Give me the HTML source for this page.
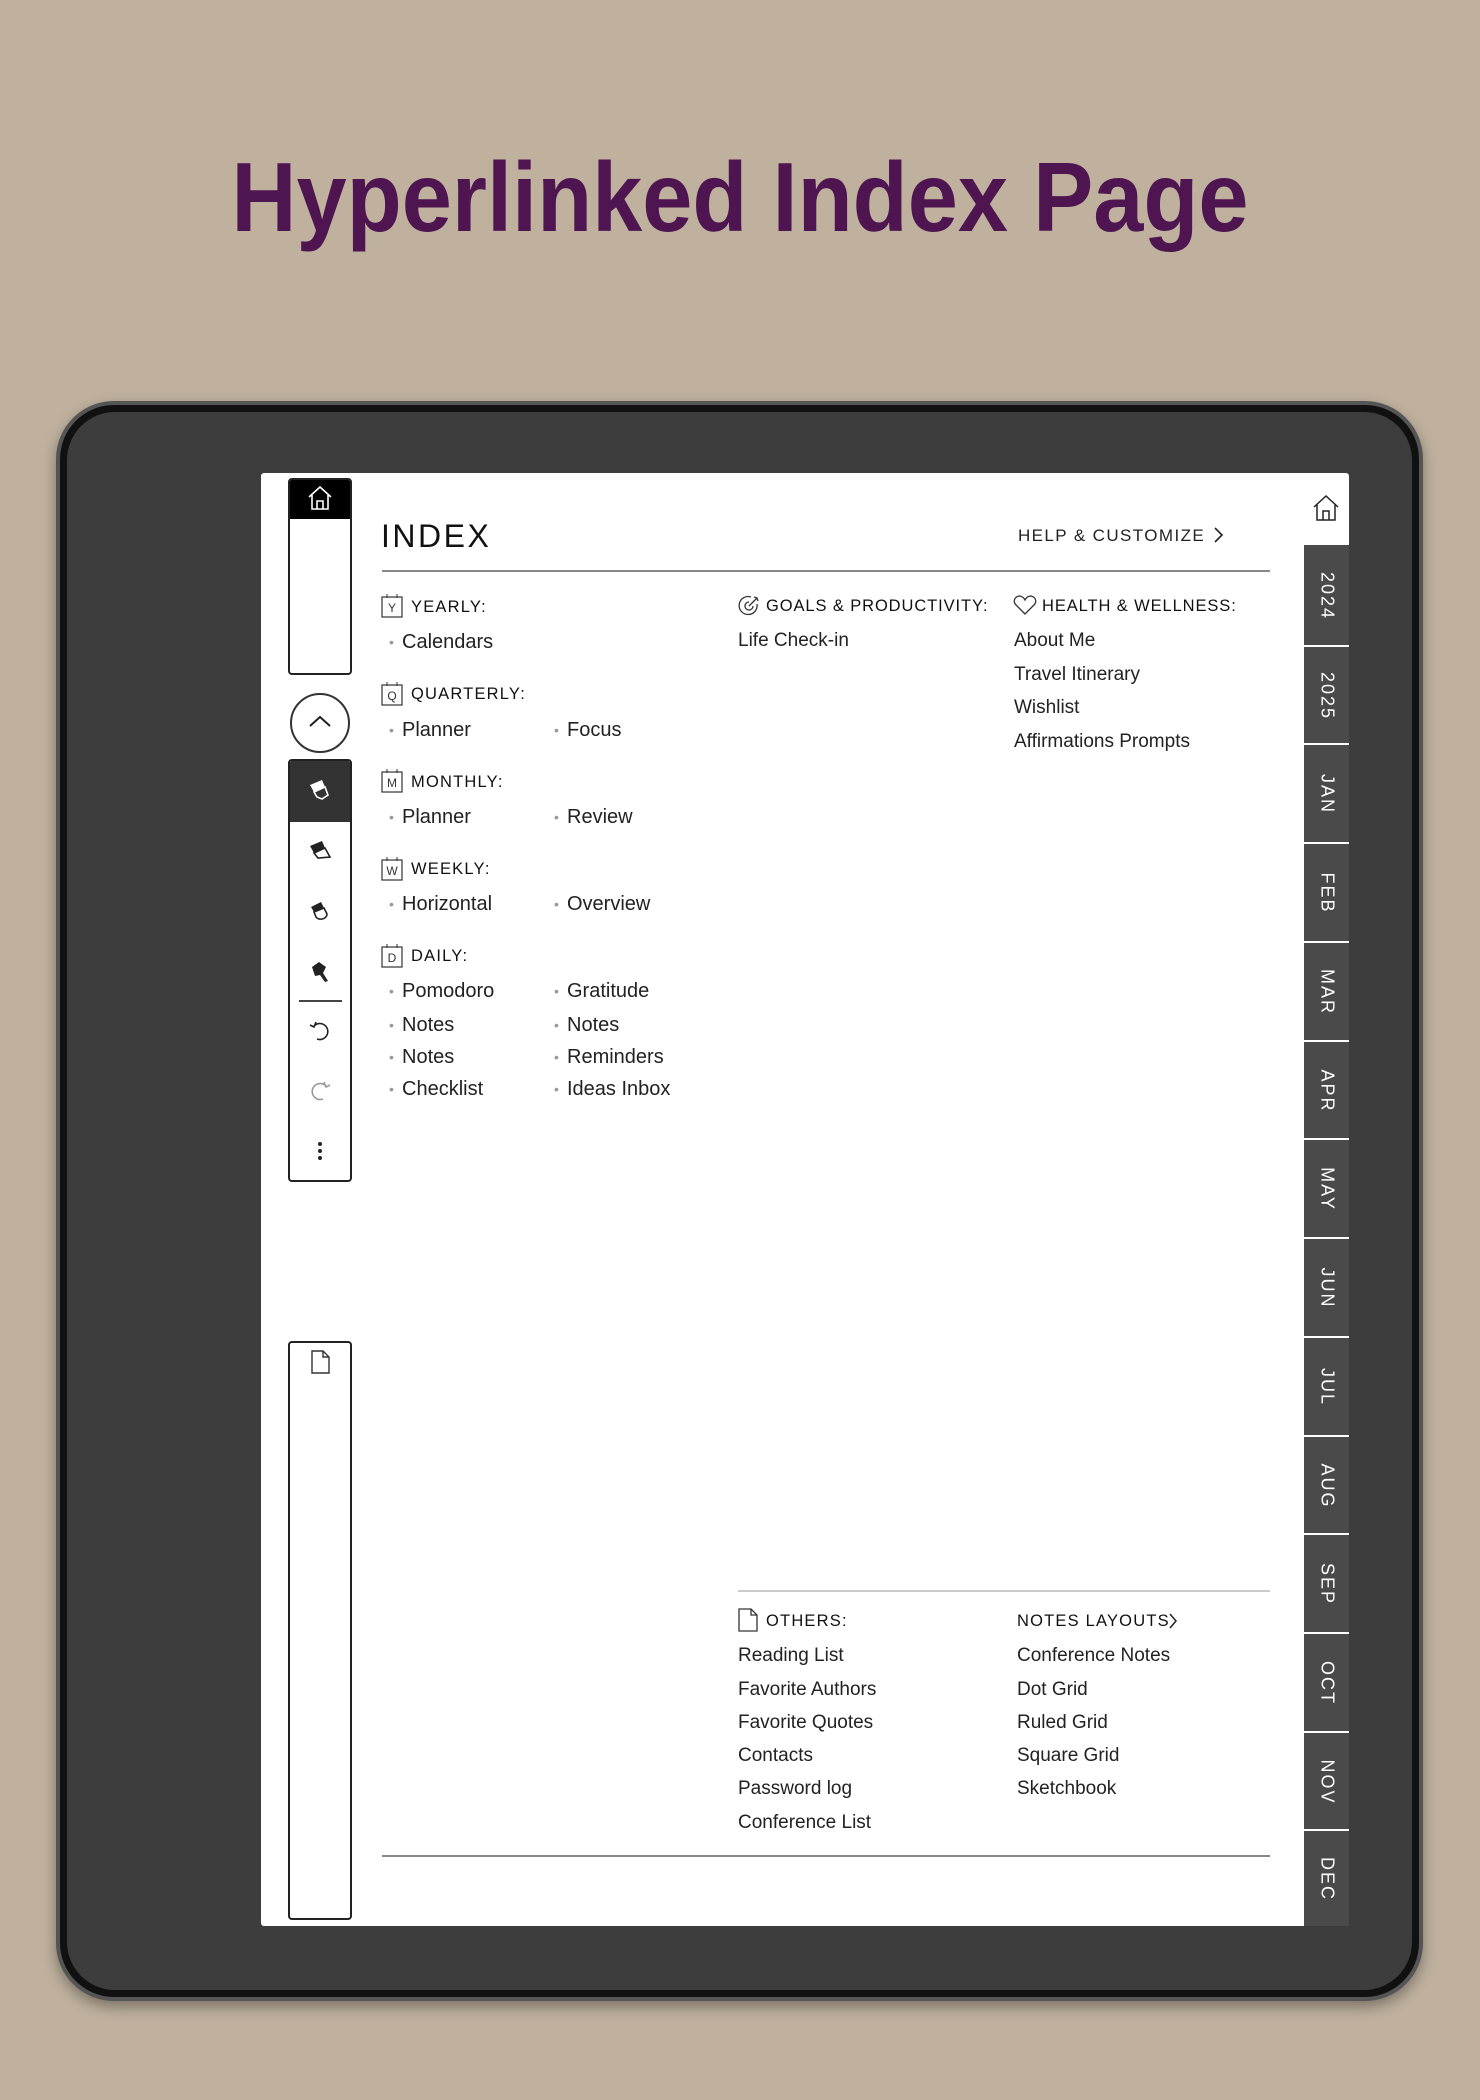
<!DOCTYPE html>
<html><head><meta charset="utf-8"><style>
*{margin:0;padding:0;box-sizing:border-box}
body{width:1480px;height:2100px;background:#bfb19e;position:relative;overflow:hidden;font-family:"Liberation Sans",sans-serif;color:#222}
.t{position:absolute;white-space:nowrap;line-height:1}
.h{font-size:16.5px;letter-spacing:1.2px;color:#111}
.i1{font-size:20px}
.i2{font-size:19px}
.b{color:#999;font-size:14px}
.tab{position:absolute;left:1304px;width:45px;background:#4a4a4a;border-top:2px solid #fff;color:#fff}
.tab span{position:absolute;left:50%;top:50%;transform:translate(-50%,-50%) rotate(90deg);font-size:18px;letter-spacing:2px;white-space:nowrap}
.ic{position:absolute}
</style></head><body>
<div class="t" style="left:0;width:1480px;text-align:center;top:148px;font-size:98px;font-weight:bold;color:#4e1551;letter-spacing:0px;transform:scaleX(0.92)">Hyperlinked Index Page</div>

<div style="position:absolute;left:56px;top:401px;width:1367px;height:1600px;border-radius:58px;background:#555;box-shadow:0 6px 14px rgba(0,0,0,.35)"></div>
<div style="position:absolute;left:60px;top:405px;width:1359px;height:1592px;border-radius:54px;background:#111"></div>
<div style="position:absolute;left:67px;top:412px;width:1345px;height:1578px;border-radius:48px;background:#3d3d3d"></div>

<div style="position:absolute;left:261px;top:473px;width:1088px;height:1453px;background:#fff;border-radius:3px"></div>

<!-- left toolbar -->
<div style="position:absolute;left:288px;top:478px;width:64px;height:197px;border:2px solid #222;border-radius:4px;overflow:hidden"><div style="height:39px;background:#000"></div></div>
<svg class="ic" style="left:306px;top:484px" width="28" height="28" viewBox="0 0 28 28" fill="none" stroke="#fff" stroke-width="1.6"><path d="M3 13 L14 3 L25 13 M6 11 V25 H22 V11 M11 25 V17 H17 V25"/></svg>
<div style="position:absolute;left:290px;top:693px;width:60px;height:60px;border:2px solid #333;border-radius:50%"></div>
<svg class="ic" style="left:308px;top:713px" width="24" height="16" viewBox="0 0 24 16" fill="none" stroke="#222" stroke-width="2"><path d="M2 13 L12 4 L22 13"/></svg>
<div style="position:absolute;left:288px;top:759px;width:64px;height:423px;border:2px solid #222;border-radius:4px;overflow:hidden"><div style="height:61px;background:#333"></div></div>
<svg class="ic" style="left:306px;top:776px" width="28" height="28" viewBox="0 0 28 28"><path d="M4 9 L16 4 L19 11 L8 16 Z" fill="#fff"/><path d="M8 16 L19 11 L22 19 L16 23 L11 21 Z" fill="none" stroke="#fff" stroke-width="1.6"/></svg>
<svg class="ic" style="left:306px;top:837px" width="28" height="28" viewBox="0 0 28 28"><path d="M4 9 L16 4 L19 11 L8 16 Z" fill="#222"/><path d="M8 16 L19 11 L24 20 L12 21 Z" fill="none" stroke="#222" stroke-width="1.6"/></svg>
<svg class="ic" style="left:306px;top:897px" width="28" height="28" viewBox="0 0 28 28"><path d="M5 10 L15 5 L18 11 L8 15 Z" fill="#222"/><path d="M8 15 L18 11 L21 17 C21 22 13 24 10 20 Z" fill="none" stroke="#222" stroke-width="1.6"/></svg>
<svg class="ic" style="left:306px;top:957px" width="28" height="28" viewBox="0 0 28 28"><path d="M6 10 L13 5 L20 10 L17 16 L22 24 L19 25 L14 18 L9 19 Z" fill="#222"/></svg>
<div style="position:absolute;left:299px;top:1000px;width:43px;height:2px;background:#444"></div>
<svg class="ic" style="left:307px;top:1018px" width="26" height="26" viewBox="0 0 26 26" fill="none" stroke="#222" stroke-width="1.6"><path d="M7 8 A8 8 0 1 1 10 21"/><path d="M3 7 L7 9 L9 4"/></svg>
<svg class="ic" style="left:307px;top:1078px" width="26" height="26" viewBox="0 0 26 26" fill="none" stroke="#999" stroke-width="1.6"><path d="M19 8 A8 8 0 1 0 16 21"/><path d="M23 7 L19 9 L17 4"/></svg>
<div style="position:absolute;left:318px;top:1142px;width:4px;height:4px;border-radius:50%;background:#222;box-shadow:0 7px 0 #222,0 14px 0 #222"></div>
<div style="position:absolute;left:288px;top:1341px;width:64px;height:579px;border:2px solid #222;border-radius:4px"></div>
<svg class="ic" style="left:309px;top:1349px" width="22" height="26" viewBox="0 0 22 26" fill="none" stroke="#333" stroke-width="1.4"><path d="M3 2 H14 L20 8 V24 H3 Z M14 2 V8 H20"/></svg>

<!-- header -->
<div class="t" style="left:381px;top:520px;font-size:32px;letter-spacing:2.5px;color:#111">INDEX</div>
<div class="t" style="left:1018px;top:527px;font-size:17px;letter-spacing:1.4px;color:#222">HELP &amp; CUSTOMIZE</div>
<svg class="ic" style="left:1212px;top:526px" width="12" height="18" viewBox="0 0 12 18" fill="none" stroke="#222" stroke-width="1.6"><path d="M3 2 L10 9 L3 16"/></svg>
<div style="position:absolute;left:382px;top:570px;width:888px;height:2px;background:#888"></div>
<svg class="ic" style="left:1311px;top:493px" width="30" height="30" viewBox="0 0 30 30" fill="none" stroke="#222" stroke-width="1.5"><path d="M3 14 L15 3 L27 14 M6 11 V27 H24 V11 M12 27 V18 H18 V27"/></svg>

<!-- tabs -->
<div class="tab" style="top:545px;height:102px;border-top:none"><span>2024</span></div>
<div class="tab" style="top:645px;height:100px"><span>2025</span></div>
<div class="tab" style="top:743px;height:100px"><span>JAN</span></div>
<div class="tab" style="top:842px;height:100px"><span>FEB</span></div>
<div class="tab" style="top:941px;height:100px"><span>MAR</span></div>
<div class="tab" style="top:1040px;height:100px"><span>APR</span></div>
<div class="tab" style="top:1138px;height:100px"><span>MAY</span></div>
<div class="tab" style="top:1237px;height:100px"><span>JUN</span></div>
<div class="tab" style="top:1336px;height:100px"><span>JUL</span></div>
<div class="tab" style="top:1435px;height:100px"><span>AUG</span></div>
<div class="tab" style="top:1533px;height:100px"><span>SEP</span></div>
<div class="tab" style="top:1632px;height:100px"><span>OCT</span></div>
<div class="tab" style="top:1731px;height:100px"><span>NOV</span></div>
<div class="tab" style="top:1829px;height:97px"><span>DEC</span></div>

<!-- column 1 -->
<svg class="ic" style="left:381px;top:593px" width="22" height="26" viewBox="0 0 22 26"><rect x="1" y="4" width="20" height="20" fill="none" stroke="#333" stroke-width="1.2"/><path d="M6 1 V5 M16 1 V5" stroke="#333"/><text x="11" y="19" font-size="12" text-anchor="middle" font-family="Liberation Sans" fill="#333">Y</text></svg>
<div class="t h" style="left:411px;top:599px">YEARLY:</div>
<div class="t b" style="left:389px;top:635px">•</div><div class="t i1" style="left:402px;top:632px">Calendars</div>

<svg class="ic" style="left:381px;top:681px" width="22" height="26" viewBox="0 0 22 26"><rect x="1" y="4" width="20" height="20" fill="none" stroke="#333" stroke-width="1.2"/><path d="M6 1 V5 M16 1 V5" stroke="#333"/><text x="11" y="19" font-size="12" text-anchor="middle" font-family="Liberation Sans" fill="#333">Q</text></svg>
<div class="t h" style="left:411px;top:686px">QUARTERLY:</div>
<div class="t b" style="left:389px;top:723px">•</div><div class="t i1" style="left:402px;top:720px">Planner</div>
<div class="t b" style="left:554px;top:723px">•</div><div class="t i1" style="left:567px;top:720px">Focus</div>

<svg class="ic" style="left:381px;top:768px" width="22" height="26" viewBox="0 0 22 26"><rect x="1" y="4" width="20" height="20" fill="none" stroke="#333" stroke-width="1.2"/><path d="M6 1 V5 M16 1 V5" stroke="#333"/><text x="11" y="19" font-size="12" text-anchor="middle" font-family="Liberation Sans" fill="#333">M</text></svg>
<div class="t h" style="left:411px;top:774px">MONTHLY:</div>
<div class="t b" style="left:389px;top:810px">•</div><div class="t i1" style="left:402px;top:807px">Planner</div>
<div class="t b" style="left:554px;top:810px">•</div><div class="t i1" style="left:567px;top:807px">Review</div>

<svg class="ic" style="left:381px;top:856px" width="22" height="26" viewBox="0 0 22 26"><rect x="1" y="4" width="20" height="20" fill="none" stroke="#333" stroke-width="1.2"/><path d="M6 1 V5 M16 1 V5" stroke="#333"/><text x="11" y="19" font-size="12" text-anchor="middle" font-family="Liberation Sans" fill="#333">W</text></svg>
<div class="t h" style="left:411px;top:861px">WEEKLY:</div>
<div class="t b" style="left:389px;top:897px">•</div><div class="t i1" style="left:402px;top:894px">Horizontal</div>
<div class="t b" style="left:554px;top:897px">•</div><div class="t i1" style="left:567px;top:894px">Overview</div>

<svg class="ic" style="left:381px;top:943px" width="22" height="26" viewBox="0 0 22 26"><rect x="1" y="4" width="20" height="20" fill="none" stroke="#333" stroke-width="1.2"/><path d="M6 1 V5 M16 1 V5" stroke="#333"/><text x="11" y="19" font-size="12" text-anchor="middle" font-family="Liberation Sans" fill="#333">D</text></svg>
<div class="t h" style="left:411px;top:948px">DAILY:</div>
<div class="t b" style="left:389px;top:984px">•</div><div class="t i1" style="left:402px;top:981px">Pomodoro</div>
<div class="t b" style="left:554px;top:984px">•</div><div class="t i1" style="left:567px;top:981px">Gratitude</div>
<div class="t b" style="left:389px;top:1018px">•</div><div class="t i1" style="left:402px;top:1015px">Notes</div>
<div class="t b" style="left:554px;top:1018px">•</div><div class="t i1" style="left:567px;top:1015px">Notes</div>
<div class="t b" style="left:389px;top:1050px">•</div><div class="t i1" style="left:402px;top:1047px">Notes</div>
<div class="t b" style="left:554px;top:1050px">•</div><div class="t i1" style="left:567px;top:1047px">Reminders</div>
<div class="t b" style="left:389px;top:1082px">•</div><div class="t i1" style="left:402px;top:1079px">Checklist</div>
<div class="t b" style="left:554px;top:1082px">•</div><div class="t i1" style="left:567px;top:1079px">Ideas Inbox</div>

<!-- column 2 -->
<svg class="ic" style="left:737px;top:594px" width="24" height="24" viewBox="0 0 24 24" fill="none" stroke="#333" stroke-width="1.3"><path d="M20 10 A9 9 0 1 1 14 3"/><path d="M16 12 A4 4 0 1 1 12 8"/><path d="M12 12 L20 4 M17 3 L20 4 L21 7"/></svg>
<div class="t h" style="left:766px;top:598px;letter-spacing:0.9px">GOALS &amp; PRODUCTIVITY:</div>
<div class="t i2" style="left:738px;top:631px">Life Check-in</div>

<!-- column 3 -->
<svg class="ic" style="left:1013px;top:594px" width="24" height="22" viewBox="0 0 24 22" fill="none" stroke="#333" stroke-width="1.3"><path d="M12 20 L3 11 C0 8 1 3 6 2 C9 2 11 4 12 6 C13 4 15 2 18 2 C23 3 24 8 21 11 Z"/></svg>
<div class="t h" style="left:1042px;top:598px;letter-spacing:0.9px">HEALTH &amp; WELLNESS:</div>
<div class="t i2" style="left:1014px;top:631px">About Me</div>
<div class="t i2" style="left:1014px;top:665px">Travel Itinerary</div>
<div class="t i2" style="left:1014px;top:698px">Wishlist</div>
<div class="t i2" style="left:1014px;top:732px">Affirmations Prompts</div>

<!-- bottom section -->
<div style="position:absolute;left:738px;top:1590px;width:532px;height:2px;background:#ccc"></div>
<svg class="ic" style="left:737px;top:1607px" width="22" height="26" viewBox="0 0 22 26" fill="none" stroke="#333" stroke-width="1.3"><path d="M2 2 H14 L20 8 V24 H2 Z M14 2 V8 H20"/></svg>
<div class="t h" style="left:766px;top:1613px">OTHERS:</div>
<div class="t h" style="left:1017px;top:1613px">NOTES LAYOUTS</div>
<svg class="ic" style="left:1168px;top:1612px" width="10" height="18" viewBox="0 0 10 18" fill="none" stroke="#222" stroke-width="1.5"><path d="M2 2 L8 9 L2 16"/></svg>
<div class="t i2" style="left:738px;top:1646px">Reading List</div>
<div class="t i2" style="left:738px;top:1680px">Favorite Authors</div>
<div class="t i2" style="left:738px;top:1713px">Favorite Quotes</div>
<div class="t i2" style="left:738px;top:1746px">Contacts</div>
<div class="t i2" style="left:738px;top:1779px">Password log</div>
<div class="t i2" style="left:738px;top:1813px">Conference List</div>
<div class="t i2" style="left:1017px;top:1646px">Conference Notes</div>
<div class="t i2" style="left:1017px;top:1680px">Dot Grid</div>
<div class="t i2" style="left:1017px;top:1713px">Ruled Grid</div>
<div class="t i2" style="left:1017px;top:1746px">Square Grid</div>
<div class="t i2" style="left:1017px;top:1779px">Sketchbook</div>
<div style="position:absolute;left:382px;top:1855px;width:888px;height:2px;background:#888"></div>
</body></html>
